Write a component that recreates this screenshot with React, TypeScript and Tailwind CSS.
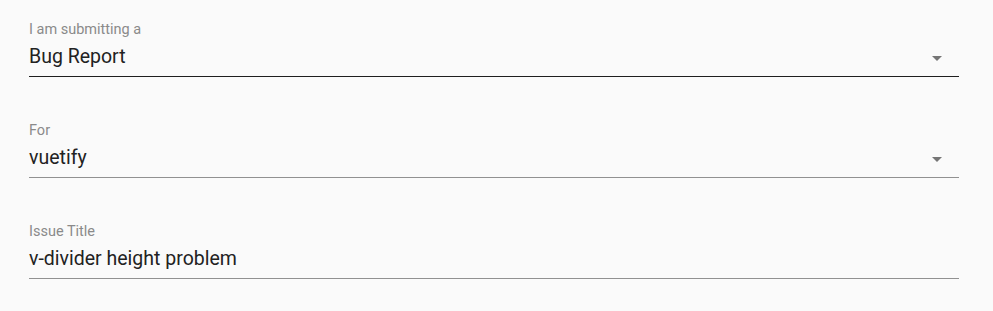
import React from 'react';

function Arrow() {
	return (
		<svg width="24" height="24" viewBox="0 0 24 24" className="shrink-0 text-[#757575]">
			<path d="M7 10l5 5 5-5z" fill="currentColor" />
		</svg>
	);
}

function Field({ label, value, select, dark }: { label: string; value: string; select?: boolean; dark?: boolean }) {
	return (
		<div className="pt-[21px]">
			<div className="text-[14.5px] leading-[18px] text-[#8a8a8a]">{label}</div>
			<div
				className={`flex items-end h-[38px] pb-[7px] border-b ${dark ? 'border-[#1f1f1f]' : 'border-[#919191]'}`}
			>
				<div className="flex-1 text-[19.5px] leading-[24px] text-[#222]">{value}</div>
				{select && (
					<div className="mr-[10px] mb-[-1px]">
						<Arrow />
					</div>
				)}
			</div>
		</div>
	);
}

export default function App() {
	return (
		<div className="min-h-[311px] bg-[#fafafa] pl-[29px] pr-[34px] flex flex-col gap-[24px]" style={{ fontFamily: 'Roboto, sans-serif' }}>
			<Field label="I am submitting a" value="Bug Report" select dark />
			<Field label="For" value="vuetify" select />
			<Field label="Issue Title" value="v-divider height problem" />
		</div>
	);
}
